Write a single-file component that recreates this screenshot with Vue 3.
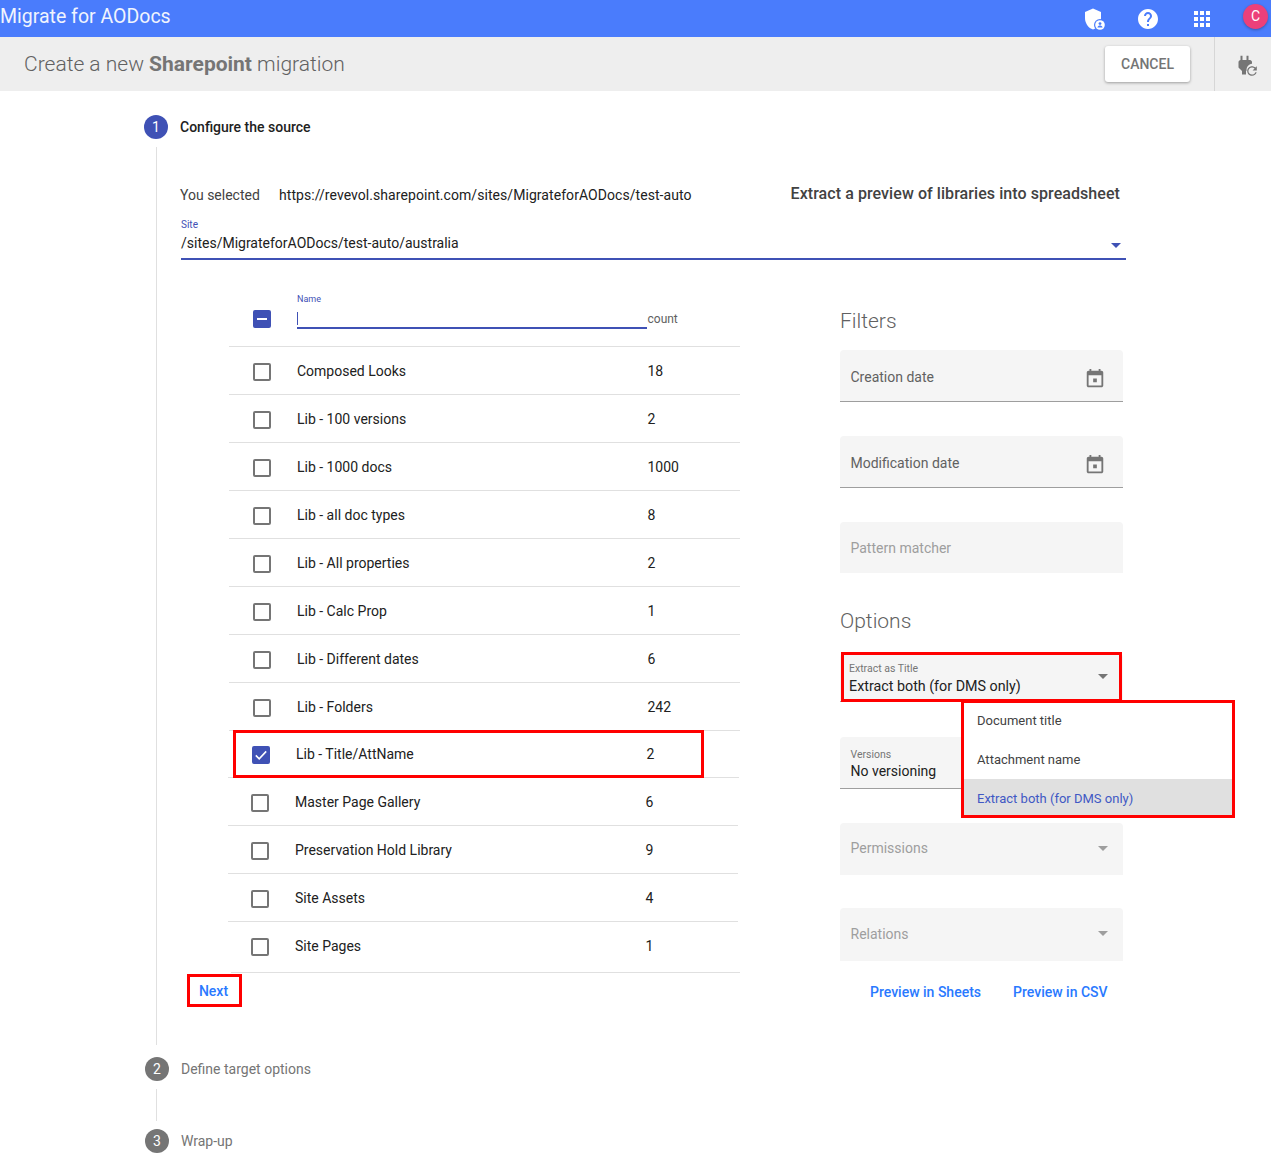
<script setup>
const rows = [
  { name: 'Composed Looks', count: 18 },
  { name: 'Lib - 100 versions', count: 2 },
  { name: 'Lib - 1000 docs', count: 1000 },
  { name: 'Lib - all doc types', count: 8 },
  { name: 'Lib - All properties', count: 2 },
  { name: 'Lib - Calc Prop', count: 1 },
  { name: 'Lib - Different dates', count: 6 },
  { name: 'Lib - Folders', count: 242 },
  { name: 'Lib - Title/AttName', count: 2, cls: 'picked' },
  { name: 'Master Page Gallery', count: 6, cls: 'shift' },
  { name: 'Preservation Hold Library', count: 9, cls: 'shift' },
  { name: 'Site Assets', count: 4, cls: 'shift' },
  { name: 'Site Pages', count: 1, cls: 'last' }
]
const calendar = 'M16 1v2H8V1H6v2H5c-1.11 0-1.99.9-1.99 2L3 19c0 1.1.89 2 2 2h14c1.1 0 2-.9 2-2V5c0-1.1-.9-2-2-2h-1V1h-2zm3 18H5V8h14v11zM10 11.5h4v4h-4z'
</script>

<template>
  <div class="page">
    <header class="topbar">
      <span class="brand">Migrate for AODocs</span>
      <div class="top-icons">
        <svg class="ic" viewBox="0 0 24 24" fill="#fff">
          <path d="M11 1.5L3 5v6c0 5.3 3.4 10.2 8 11.5 4.6-1.3 8-6.2 8-11.5V5l-8-3.5z" />
          <circle cx="18" cy="18" r="6" fill="#4a7cfc" />
          <circle cx="18" cy="18" r="4.8" fill="#fff" />
          <circle cx="18" cy="16.6" r="1.4" fill="#4a7cfc" />
          <path d="M15.4 20.6c.4-1.4 1.4-2 2.6-2s2.2.6 2.6 2z" fill="#4a7cfc" />
        </svg>
        <svg class="ic" viewBox="0 0 24 24" fill="#fff">
          <path d="M12 2C6.48 2 2 6.48 2 12s4.48 10 10 10 10-4.48 10-10S17.52 2 12 2zm1 17h-2v-2h2v2zm2.07-7.75l-.9.92C13.45 12.9 13 13.5 13 15h-2v-.5c0-1.1.45-2.1 1.17-2.83l1.24-1.26c.37-.36.59-.86.59-1.41 0-1.1-.9-2-2-2s-2 .9-2 2H8c0-2.21 1.79-4 4-4s4 1.79 4 4c0 .88-.36 1.68-.93 2.25z" />
        </svg>
        <svg class="ic" viewBox="0 0 24 24" fill="#fff">
          <path d="M4 8h4V4H4v4zm6 12h4v-4h-4v4zm-6 0h4v-4H4v4zm0-6h4v-4H4v4zm6 0h4v-4h-4v4zm6-10v4h4V4h-4zm-6 4h4V4h-4v4zm6 6h4v-4h-4v4zm0 6h4v-4h-4v4z" />
        </svg>
        <span class="avatar">C</span>
      </div>
    </header>

    <div class="subbar">
      <h1 class="subtitle">Create a new <b>Sharepoint</b> migration</h1>
      <button class="cancel">CANCEL</button>
      <div class="plug">
        <svg class="plug-ic" viewBox="0 0 24 24" fill="#757575">
          <path d="M12.5 7V2.8h-2V7H6.5V2.8h-2V7C3.5 7 2.5 8 2.5 9v5.5L6 18v3.5h4V18l.6-.6c-.3-3 1.9-6.2 5.4-6.6V9c0-1-1-2-1.99-2z" />
          <path transform="translate(8.8 10.8) scale(.6)" d="M17.65 6.35C16.2 4.9 14.21 4 12 4c-4.42 0-7.99 3.58-7.99 8s3.57 8 7.99 8c3.73 0 6.84-2.55 7.73-6h-2.08c-.82 2.33-3.04 4-5.65 4-3.31 0-6-2.69-6-6s2.69-6 6-6c1.66 0 3.14.69 4.22 1.78L13 11h7V4l-2.35 2.35z" />
        </svg>
      </div>
    </div>

    <main class="stepper">
      <div class="step-head">
        <span class="dot active">1</span>
        <span class="step-title">Configure the source</span>
      </div>

      <section class="step-body">
        <div class="selected">
          <span class="sel-label">You selected</span>
          <span class="sel-url">https://revevol.sharepoint.com/sites/MigrateforAODocs/test-auto</span>
          <span class="sel-extract">Extract a preview of libraries into spreadsheet</span>
        </div>

        <div class="site">
          <div class="site-label">Site</div>
          <div class="site-value">/sites/MigrateforAODocs/test-auto/australia</div>
          <span class="site-caret"></span>
        </div>

        <div class="columns">
          <div class="left">
            <div class="table">
              <div class="row head">
                <span class="box indet"><span class="dash"></span></span>
                <div class="name-filter">
                  <div class="name-label">Name</div>
                  <div class="name-input"><span class="cursor"></span></div>
                </div>
                <span class="count-head">count</span>
              </div>
              <div v-for="r in rows" :key="r.name" class="row" :class="r.cls">
                <span class="box item-box" :class="{ checked: r.cls === 'picked' }">
                  <svg v-if="r.cls === 'picked'" viewBox="0 0 18 18" class="tick">
                    <path d="M3.8 9.4l3.4 3.4 7-7.4" fill="none" stroke="#fff" stroke-width="1.6" />
                  </svg>
                </span>
                <span class="name">{{ r.name }}</span>
                <span class="count">{{ r.count }}</span>
                <span v-if="r.cls === 'picked'" class="red red-row"></span>
              </div>
            </div>
            <div class="next-wrap">
              <span class="next">Next</span>
            </div>
          </div>

          <aside class="right">
            <h2 class="section first">Filters</h2>
            <div class="field dated">
              <span>Creation date</span>
              <svg class="cal" viewBox="0 0 24 24" fill="#757575"><path :d="calendar" /></svg>
            </div>
            <div class="field gap dated">
              <span>Modification date</span>
              <svg class="cal" viewBox="0 0 24 24" fill="#757575"><path :d="calendar" /></svg>
            </div>
            <div class="field gap disabled short"><span>Pattern matcher</span></div>

            <h2 class="section">Options</h2>
            <div class="field select extract">
              <div class="sel-text">
                <div class="float">Extract as Title</div>
                <div class="val">Extract both (for DMS only)</div>
              </div>
              <span class="caret"></span>
              <span class="red red-extract"></span>
              <div class="menu">
                <div class="item one">Document title</div>
                <div class="item two">Attachment name</div>
                <div class="item three">Extract both (for DMS only)</div>
              </div>
            </div>
            <div class="field select versions">
              <div class="sel-text">
                <div class="float">Versions</div>
                <div class="val plain">No versioning</div>
              </div>
            </div>
            <div class="field gap disabled perms"><span>Permissions</span><span class="caret"></span></div>
            <div class="field disabled relations"><span>Relations</span><span class="caret"></span></div>

            <div class="previews">
              <span class="link">Preview in Sheets</span>
              <span class="link">Preview in CSV</span>
            </div>
          </aside>
        </div>
      </section>

      <div class="step-head later">
        <span class="dot">2</span>
        <span class="step-title muted">Define target options</span>
      </div>
      <div class="connector"></div>
      <div class="step-head third">
        <span class="dot">3</span>
        <span class="step-title muted">Wrap-up</span>
      </div>
    </main>
  </div>
</template>

<style>
html, body { margin: 0; background: #fff; }
</style>

<style scoped>
.page { font-family: Roboto, "Liberation Sans", sans-serif; font-size: 14px; color: #212121; height: 1171px; overflow: hidden; }
.topbar { height: 37px; background: #4a7cfc; display: flex; align-items: center; justify-content: space-between; color: #fff; }
.brand { font-size: 19.5px; line-height: 32px; opacity: .92; margin-top: -4px; }
.top-icons { display: flex; align-items: center; gap: 30px; padding-right: 3px; }
.ic { width: 24px; height: 24px; display: block; }
.avatar { width: 25px; height: 25px; margin: -5px 0 0 -1px; border-radius: 50%; background: #ec407a; color: #fff; font-size: 14px; display: flex; align-items: center; justify-content: center; box-shadow: 0 1px 3px rgba(0,0,0,.3); }
.subbar { height: 54px; background: #eeeeee; display: flex; align-items: center; padding-left: 24px; }
.subtitle { flex: 1; margin: 0; font-size: 21px; font-weight: 300; color: #616161; }
.subtitle b { font-weight: 700; color: #757575; }
.cancel { width: 85px; height: 36px; border: 0; border-radius: 3px; background: #fff; color: #757575; font: 500 14px Roboto, sans-serif; box-shadow: 0 1px 3px rgba(0,0,0,.35); padding: 0; }
.plug { width: 56px; height: 54px; margin-left: 24px; border-left: 1px solid #d6d6d6; display: flex; align-items: center; justify-content: center; }
.plug-ic { width: 24px; height: 24px; margin: 2px 0 0 10px; }

.stepper { padding: 24px 0 0 144px; }
.step-head { display: flex; align-items: center; height: 24px; }
.dot { width: 24px; height: 24px; border-radius: 50%; background: #757575; color: #fff; font-size: 14px; display: flex; align-items: center; justify-content: center; }
.dot.active { background: #3f51b5; }
.step-title { margin-left: 12px; font-weight: 500; color: #212121; }
.step-title.muted { font-weight: 400; color: #757575; }
.later, .third { margin-left: 1px; }
.later { margin-top: 12px; }
.connector { width: 1px; height: 32px; margin: 8px 0 8px 12px; background: #e0e0e0; }

.step-body { margin: 8px 0 0 12px; border-left: 1px solid #e0e0e0; padding: 38px 0 38px 23px; width: 946px; }
.selected { display: flex; align-items: center; height: 20px; }
.sel-label { color: #424242; width: 99px; }
.sel-url { color: #212121; letter-spacing: .06px; }
.sel-extract { margin-left: auto; font-size: 16px; font-weight: 500; color: #424242; letter-spacing: .07px; transform: translateY(-2px); margin-right: 6px; }

.site { position: relative; margin: 14px 0 0 1px; width: 945px; height: 39px; border-bottom: 2px solid #3f51b5; }
.site-label { font-size: 10px; line-height: 12px; color: #3f51b5; }
.site-value { margin-top: 2px; line-height: 20px; }
.site-caret { position: absolute; right: 5px; top: 24px; border: 5px solid transparent; border-top-color: #3f51b5; border-bottom: 0; }

.columns { display: flex; align-items: flex-start; }
.left { margin-left: 49px; width: 512px; }
.table { display: flex; flex-direction: column; }
.row { position: relative; display: grid; grid-template-columns: 18px 350px 1fr; align-items: center; height: 47px; padding-left: 24px; border-bottom: 1px solid #e0e0e0; width: 487px; }
.row .name { margin-left: 26px; }
.row .count { margin-left: 26.5px; }
.head { height: 50px; padding-top: 34px; padding-bottom: 2px; }
.picked { height: 46px; margin-left: -1px; }
.shift { margin-left: -1px; padding-left: 23px; }
.last { height: 48px; padding-bottom: 2px; margin-left: 2px; padding-left: 20px; width: 489px; }
.box { width: 14px; height: 14px; border: 2px solid #757575; border-radius: 2px; display: block; }
.item-box { transform: translateY(1px); }
.indet, .checked { background: #3f51b5; border-color: #3f51b5; }
.indet { display: flex; align-items: center; justify-content: center; }
.dash { width: 10px; height: 2px; background: #fff; }
.tick { width: 18px; height: 18px; margin: -2px; display: block; }
.name-filter { margin-left: 26px; align-self: stretch; }
.name-label { font-size: 9px; line-height: 10px; color: #3f51b5; }
.name-input { margin-top: 8px; height: 15px; border-bottom: 2px solid #3f51b5; width: 350px; }
.cursor { display: block; width: 1px; height: 13px; background: #3f51b5; }
.count-head { margin-left: 26.5px; font-size: 12px; color: #616161; }
.next-wrap { margin: 1px 0 0 -42px; }
.next { display: flex; align-items: center; justify-content: center; box-sizing: content-box; width: 47px; height: 27px; padding-right: 2px; border: 3px solid #f00; color: #2979ff; font-weight: 500; }

.right { margin-left: 99px; width: 283px; flex-shrink: 0; }
.section { margin: 33px 0 18px; height: 30px; line-height: 30px; font-size: 21px; font-weight: 300; color: #616161; }
.section.first { margin: 46px 0 14px; }
.field { position: relative; box-sizing: border-box; height: 52px; background: #f5f5f5; border-bottom: 1px solid #9e9e9e; border-radius: 4px 4px 0 0; display: flex; align-items: center; justify-content: space-between; padding: 0 17px 0 10.5px; color: #616161; }
.gap { margin-top: 34px; }
.dated { padding-top: 2px; }
.cal { width: 22px; height: 22px; margin-top: 4px; }
.disabled { border-bottom: 0; color: #9e9e9e; }
.disabled .caret { border-top-color: #9e9e9e; }
.short { height: 51px; }
.perms { padding-bottom: 2px; }
.select { padding-left: 9px; padding-top: 3px; }
.extract { height: 48px; }
.versions { margin-top: 35px; padding-left: 10.5px; }
.relations { margin-top: 33px; height: 53px; padding-bottom: 2px; }
.sel-text { color: #212121; }
.float { font-size: 10.5px; line-height: 13px; color: #757575; }
.val { line-height: 20px; font-size: 14.3px; margin-top: 1px; }
.val.plain { font-size: 14px; margin-top: 0; }
.caret { border: 5px solid transparent; border-top-color: #757575; border-bottom: 0; margin-right: -2px; }
.extract .caret { margin-top: -6px; }
.red { position: absolute; border: 3px solid #f00; box-sizing: border-box; pointer-events: none; }
.red-row { left: 5px; top: -1px; width: 471px; height: 48px; }
.red-extract { left: 1px; top: -2px; width: 281px; height: 50px; }
.menu { position: absolute; z-index: 2; left: 121px; top: 46px; width: 274px; box-sizing: border-box; border: 3px solid #f00; background: #fff; }
.item { box-sizing: border-box; display: flex; align-items: center; padding-left: 13px; font-size: 13px; color: #424242; }
.item.one { height: 37px; padding-bottom: 3px; }
.item.two { height: 39px; }
.item.three { height: 36px; padding-top: 2px; background: #e0e0e0; color: #4058c4; }
.previews { display: flex; gap: 32px; margin: 21px 0 0 30px; }
.link { color: #2979ff; font-weight: 500; line-height: 20px; }
</style>
